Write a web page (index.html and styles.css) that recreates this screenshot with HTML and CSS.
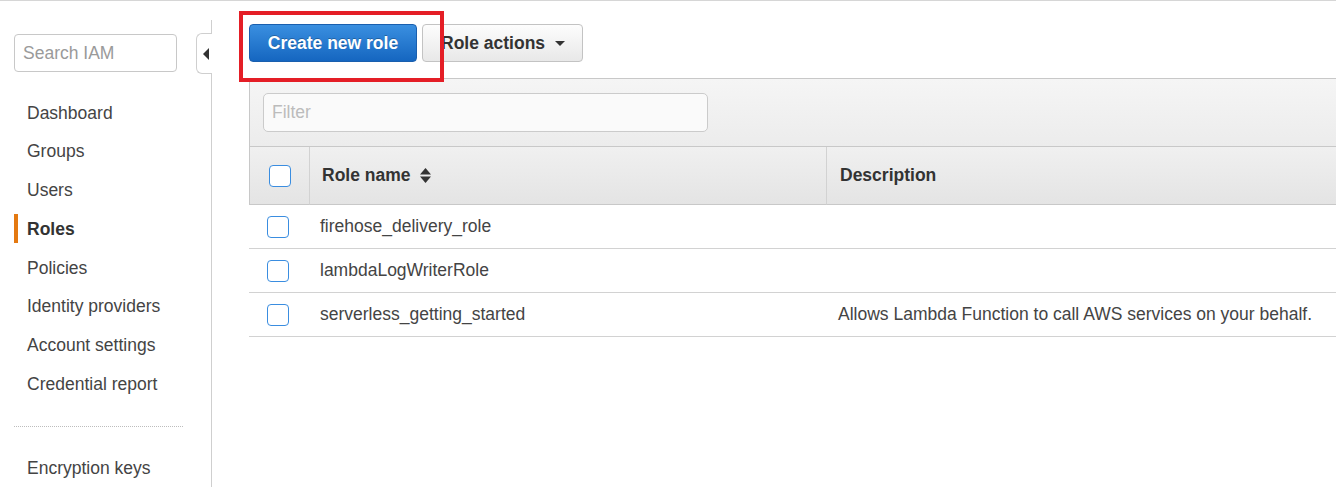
FILE: index.html
```html
<!DOCTYPE html>
<html lang="en">
<head>
<meta charset="utf-8">
<title>IAM Roles</title>
<link rel="stylesheet" href="styles.css">
</head>
<body>
<div class="page">
  <aside class="sidebar">
    <div class="search"><input class="search-input" type="text" placeholder="Search IAM"></div>
    <button class="collapse" aria-label="Collapse"><span class="collapse-arrow"></span></button>
    <nav class="nav">
      <a class="nav-item">Dashboard</a>
      <a class="nav-item">Groups</a>
      <a class="nav-item">Users</a>
      <a class="nav-item active">Roles</a>
      <a class="nav-item">Policies</a>
      <a class="nav-item">Identity providers</a>
      <a class="nav-item">Account settings</a>
      <a class="nav-item">Credential report</a>
      <div class="nav-sep"></div>
      <a class="nav-item">Encryption keys</a>
    </nav>
  </aside>
  <main class="main">
    <div class="actions">
      <button class="btn btn-primary">Create new role</button>
      <button class="btn btn-default">Role actions <span class="caret"></span></button>
      <div class="highlight"></div>
    </div>
    <section class="panel">
      <div class="panel-toolbar">
        <input class="filter" type="text" placeholder="Filter">
      </div>
      <div class="grid">
        <div class="hcell hcheck"><span class="cb"></span></div>
        <div class="hcell hname">Role name
          <svg class="sort" width="11" height="15" viewBox="0 0 11 15"><path d="M0 6.5 L5.5 0 L11 6.5 Z" fill="#333"/><path d="M0 8.5 L11 8.5 L5.5 15 Z" fill="#333"/></svg>
        </div>
        <div class="hcell hdesc">Description</div>

        <div class="cell ccheck"><span class="cb"></span></div>
        <div class="cell cname">firehose_delivery_role</div>
        <div class="cell cdesc"></div>

        <div class="cell ccheck"><span class="cb"></span></div>
        <div class="cell cname">lambdaLogWriterRole</div>
        <div class="cell cdesc"></div>

        <div class="cell ccheck"><span class="cb"></span></div>
        <div class="cell cname">serverless_getting_started</div>
        <div class="cell cdesc">Allows Lambda Function to call AWS services on your behalf.</div>
      </div>
    </section>
  </main>
</div>
</body>
</html>
```

FILE: styles.css
```css
* { box-sizing: border-box; }
html, body {
  margin: 0;
  padding: 0;
  background: #fff;
  overflow: hidden;
}
body {
  font-family: "Liberation Sans", Arial, sans-serif;
  font-size: 17.5px;
  color: #444;
}
.page {
  display: flex;
  border-top: 1px solid #d6d6d6;
  min-height: 487px;
}

/* Sidebar */
.sidebar {
  position: relative;
  width: 212px;
  flex: 0 0 212px;
  margin-top: 19px;
  border-right: 1px solid #cfcfcf;
  padding: 14px 0 0 14px;
}
.search-input {
  display: block;
  width: 163px;
  height: 38px;
  border: 1px solid #c8c8c8;
  border-radius: 4px;
  padding: 0 8px;
  font-family: "Liberation Sans", Arial, sans-serif;
  font-size: 17.5px;
  color: #444;
  outline: none;
}
.search-input::placeholder { color: #9a9a9a; }
.collapse {
  position: absolute;
  top: 13px;
  left: 196px;
  width: 16px;
  height: 41px;
  padding: 0;
  background: #fff;
  border: 1px solid #cfcfcf;
  border-right: none;
  border-radius: 6px 0 0 6px;
  display: flex;
  align-items: center;
  justify-content: center;
}
.collapse-arrow {
  display: block;
  width: 0;
  height: 0;
  border-top: 6px solid transparent;
  border-bottom: 6px solid transparent;
  border-right: 6px solid #333;
  margin-left: 2px;
}
.nav {
  margin-top: 21.8px;
  margin-left: -14px;
  display: flex;
  flex-direction: column;
}
.nav-item {
  position: relative;
  display: block;
  height: 38.7px;
  line-height: 38.7px;
  padding-left: 27px;
  color: #444;
  white-space: nowrap;
}
.nav-item.active {
  font-weight: bold;
  color: #333;
}
.nav-item.active::before {
  content: "";
  position: absolute;
  left: 14px;
  top: 4px;
  width: 4px;
  height: 29px;
  background: #e47911;
}
.nav-sep {
  margin: 22.3px 0 22.3px 14px;
  width: 169px;
  border-top: 1px dotted #bdbdbd;
}

/* Main */
.main {
  flex: 1;
  min-width: 0;
  padding: 23px 0 0 37px;
}
.actions {
  position: relative;
  display: flex;
  gap: 5px;
}
.btn {
  height: 38px;
  border-radius: 4px;
  font-family: "Liberation Sans", Arial, sans-serif;
  font-size: 17.5px;
  font-weight: bold;
  padding: 0;
  display: flex;
  align-items: center;
  justify-content: center;
}
.btn-primary {
  width: 168px;
  color: #fff;
  background: linear-gradient(#3a8fe0, #1566c0);
  border: 1px solid #1a5fae;
  text-shadow: 0 -1px 0 rgba(0,0,0,0.25);
}
.btn-default {
  width: 161px;
  color: #333;
  background: linear-gradient(#fdfdfd, #e8e8e8);
  border: 1px solid #c3c3c3;
  justify-content: flex-start;
  padding-left: 18px;
}
.caret {
  display: inline-block;
  width: 0;
  height: 0;
  margin-left: 10px;
  border-left: 5px solid transparent;
  border-right: 5px solid transparent;
  border-top: 5px solid #333;
}
.highlight {
  position: absolute;
  left: -10px;
  top: -13px;
  width: 205px;
  height: 71px;
  border: 4px solid #e41e26;
  pointer-events: none;
  z-index: 2;
}

/* Panel */
.panel {
  margin-top: 16px;
}
.panel-toolbar {
  border-top: 1px solid #c8c8c8;
  border-left: 1px solid #c8c8c8;
  border-bottom: 1px solid #c8c8c8;
  background: linear-gradient(#f5f5f5, #ececec);
  padding: 14px 0 14px 13px;
}
.filter {
  display: block;
  width: 445px;
  height: 39px;
  border: 1px solid #cbcbcb;
  border-radius: 5px;
  background: #fafafa;
  padding: 0 8px;
  font-family: "Liberation Sans", Arial, sans-serif;
  font-size: 17.5px;
  outline: none;
}
.filter::placeholder { color: #bcbcbc; }

.grid {
  display: grid;
  grid-template-columns: 61px 517px 1fr;
}
.hcell {
  height: 58px;
  background: linear-gradient(#f0f0f0, #e4e4e4);
  border-bottom: 1px solid #c8c8c8;
  display: flex;
  align-items: center;
  font-weight: bold;
  color: #333;
}
.hcheck {
  border-left: 1px solid #c8c8c8;
  border-right: 1px solid #d2d2d2;
  padding-left: 19px;
}
.hname {
  border-right: 1px solid #d2d2d2;
  padding-left: 12px;
}
.sort { margin-left: 9px; }
.hdesc { padding-left: 13px; }

.cell {
  height: 44px;
  border-bottom: 1px solid #d2d2d2;
  display: flex;
  align-items: center;
  color: #444;
  white-space: nowrap;
}
.ccheck {
  padding-left: 18px;
}
.cname { padding-left: 10px; }
.cdesc { padding-left: 11px; }

.cb {
  display: block;
  width: 22px;
  height: 22px;
  border: 1.5px solid #3a8de0;
  border-radius: 4px;
  background: #fff;
}
```
